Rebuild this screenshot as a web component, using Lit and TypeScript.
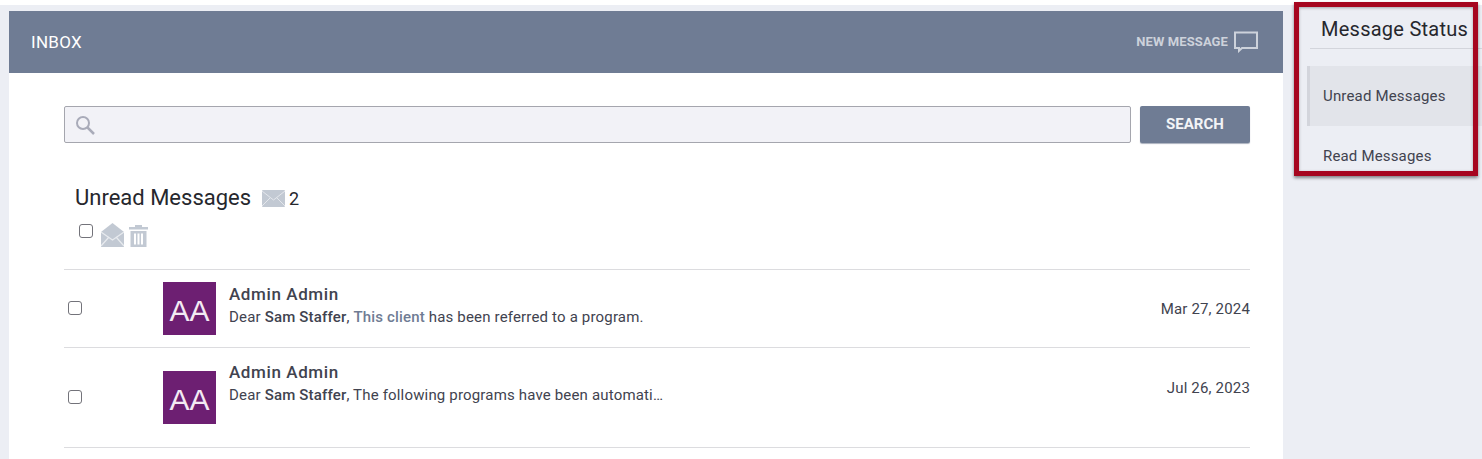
import { LitElement, html, css } from "lit";
import { customElement } from "lit/decorators.js";

const msgs = [
  { date: "Mar 27, 2024", tall: false, body: html`Dear <b>Sam Staffer</b>, <a>This client</a> has been referred to a program.` },
  { date: "Jul 26, 2023", tall: true, body: html`Dear <b>Sam Staffer</b>, The following programs have been automati…` },
];

@customElement("app-root")
export class AppRoot extends LitElement {
  static styles = css`
    :host { display: block; width: 1482px; height: 459px; overflow: hidden; background: #fff; font-family: Roboto, "Liberation Sans", sans-serif; color: #41434f; position: relative; }
    .page { display: flex; height: 454px; margin-top: 5px; background: #eceef4; padding: 6px 0 0 9px; box-sizing: border-box; }
    .main { width: 1274px; flex: none; background: #fff; height: 448px; }
    .head { height: 62px; background: #6f7c94; display: flex; align-items: center; justify-content: space-between; padding: 0 25px 0 22px; color: #fff; }
    .head .title { font-size: 17px; letter-spacing: .3px; }
    .new { display: flex; align-items: center; gap: 6px; font-size: 13px; letter-spacing: .1px; font-weight: 700; color: #cdd2db; }
    .new svg { margin-top: -1px; }
    .new span { margin-top: -2px; }
    .body { padding: 33px 33px 0 55px; }
    .search { display: flex; gap: 9px; }
    .field { flex: 1; height: 37px; box-sizing: border-box; border: 1px solid #a5a6ae; border-radius: 2px; background: #f2f2f7; display: flex; align-items: center; padding-left: 10px; }
    .btn { width: 110px; height: 37px; padding-bottom: 2px; box-sizing: border-box; background: #6f7c94; color: #f3f4f7; font-weight: 700; font-size: 15px; display: flex; align-items: center; justify-content: center; border-radius: 2px; box-shadow: 0 1px 1px #a9b0bd; }
    .h { display: flex; align-items: center; margin: 40px 0 0 11px; height: 28px; color: #26272d; }
    .h .t { font-size: 22px; margin-right: 11px; }
    .h svg { margin-top: 2px; }
    .h .n { font-size: 18px; margin-left: 4px; padding-top: 2px; }
    .tools { display: flex; align-items: flex-start; height: 52px; margin: 6px 0 0 15px; }
    input { appearance: none; width: 14px; height: 14px; margin: 0; box-sizing: border-box; border: 1px solid #73737a; border-radius: 3px; background: #fff; flex: none; }
    .tools input { margin-top: 7px; margin-right: 8px; }
    .tools svg { margin-top: 6px; }
    .tools svg + svg { margin-left: 5px; margin-top: 8px; }
    .rows { border-top: 1px solid #dcdcdf; }
    .row { display: flex; height: 77px; border-bottom: 1px solid #dcdcdf; padding-left: 4px; align-items: flex-start; }
    .row.tall { height: 99px; }
    .row input { margin-top: 31px; }
    .row.tall input { margin-top: 42px; }
    .av { width: 53px; height: 53px; margin: 12px 13px 0 81px; background: #6d1f72; color: #f3eaf3; font: 30px/57px "Liberation Sans", sans-serif; text-align: center; flex: none; }
    .row.tall .av { margin-top: 23px; }
    .txt { flex: 1; padding-top: 14px; }
    .name { font-size: 17px; letter-spacing: .6px; font-weight: 500; line-height: 20px; }
    .msg { font-size: 15px; letter-spacing: .17px; line-height: 20px; margin-top: 3px; }
    .msg b { font-weight: 500; }
    .msg a { color: #6f7c94; font-weight: 500; }
    .date { font-size: 15px; letter-spacing: .17px; line-height: 20px; margin-top: 29px; }
    .row.tall .date { margin-top: 30px; }
    .side { flex: 1; padding: 0 0 0 27px; min-width: 0; }
    .side .st { font-size: 20px; color: #26272d; border-bottom: 1px solid #d3d5dc; height: 38px; padding: 5px 0 0 12px; line-height: 26px; white-space: nowrap; box-sizing: border-box; letter-spacing: .25px; margin-left: 0; text-indent: -1px; }
    .item { height: 60px; display: flex; align-items: center; margin-left: -3px; padding-left: 13px; font-size: 15px; letter-spacing: .17px; color: #41434f; border-left: 3px solid transparent; }
    .item.on { background: #e2e4ea; border-left-color: #d3d5dc; margin-top: 17px; }
    .mark { position: absolute; left: 1294px; top: 2px; width: 184px; height: 174px; box-sizing: border-box; border: 5px solid #a6061f; box-shadow: 0 2px 3px rgba(0,0,0,.45), inset 0 1px 3px rgba(0,0,0,.3); }
  `;

  render() {
    return html`
      <div class="page">
        <div class="main">
          <div class="head">
            <span class="title">INBOX</span>
            <div class="new"><span>NEW MESSAGE</span>
              <svg width="24" height="22" viewBox="0 0 24 22" fill="none" stroke="#cdd2db" stroke-width="2"><path d="M1 1.500h22v15.500H8l-3 2.800V17H1z"/></svg>
            </div>
          </div>
          <div class="body">
            <div class="search">
              <div class="field">
                <svg width="20" height="20" viewBox="0 0 20 20" fill="none" stroke="#a9abb9" stroke-width="2"><circle cx="8" cy="8" r="6"/><path d="M12.500 12.500 19 19" stroke-width="2.500"/></svg>
              </div>
              <div class="btn">SEARCH</div>
            </div>
            <div class="h">
              <span class="t">Unread Messages</span>
              <svg width="23" height="17" viewBox="0 0 23 17"><rect width="23" height="17" rx="1" fill="#c2c9d3"/><path d="M0 1 11.500 10 23 1M0 16l8-8M23 16l-8-8" fill="none" stroke="#e4e7ec" stroke-width="1"/></svg>
              <span class="n">2</span>
            </div>
            <div class="tools">
              <input type="checkbox" />
              <svg width="23" height="24" viewBox="0 0 23 24"><path d="M0 9 11.500 0 23 9v15H0z" fill="#c2c9d3"/><path d="M0 9 11.500 17 23 9M0 23l8-9M23 23l-8-9" fill="none" stroke="#e8ebef" stroke-width="1.200"/></svg>
              <svg width="19" height="22" viewBox="0 0 19 22" fill="#c2c9d3"><path d="M0 2h6V0h7v2h6v2.500H0z"/><path d="M1.500 6h16v16h-16zM5 8.500v11h2v-11zM8.500 8.500v11h2v-11zM12 8.500v11h2v-11z" fill-rule="evenodd"/></svg>
            </div>
            <div class="rows">
              ${msgs.map((m) => html`
                <div class="row ${m.tall ? "tall" : ""}">
                  <input type="checkbox" />
                  <div class="av">AA</div>
                  <div class="txt">
                    <div class="name">Admin Admin</div>
                    <div class="msg">${m.body}</div>
                  </div>
                  <div class="date">${m.date}</div>
                </div>`)}
            </div>
          </div>
        </div>
        <div class="side">
          <div class="st">Message Status</div>
          <div class="item on">Unread Messages</div>
          <div class="item">Read Messages</div>
        </div>
      </div>
      <div class="mark"></div>
    `;
  }
}
